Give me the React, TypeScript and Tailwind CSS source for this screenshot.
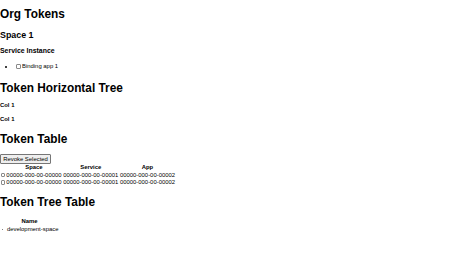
function Box({ className = "" }: { className?: string }) {
  return (
    <span
      className={`inline-block w-[4.6px] h-[4.6px] border-[0.6px] border-[#8a8a8a] rounded-[1px] bg-white align-[-0.5px] ${className}`}
    />
  );
}

const rows = [
  ["00000-000-00-00000", "00000-000-00-00001", "00000-000-00-00002"],
  ["00000-000-00-00000", "00000-000-00-00001", "00000-000-00-00002"],
];

export default function App() {
  const h1 = "text-[11.85px] leading-[1.15] font-bold mb-0";
  const h4 = "text-[5.92px] leading-[1.15] font-bold mb-0";
  return (
    <div className="font-['Liberation_Sans',Arial,sans-serif] text-[5.92px] leading-[1.15] text-black bg-white min-h-[266px] overflow-hidden">
      <h1 className={`${h1} mt-[7.5px]`}>Org Tokens</h1>

      <div>
        <h2 className="text-[8.89px] leading-[1.15] font-bold mt-[8.5px] mb-0">Space 1</h2>
        <h3 className="text-[6.93px] leading-[1.15] font-bold mt-[6.9px] mb-0">Service Instance</h3>
        <ul className="list-disc pl-[14.8px] mt-[8.6px] mb-0">
          <li>
            <label>
              <Box className="ml-[1.5px] mr-[1.1px]" />
              Binding app 1
            </label>
          </li>
        </ul>
      </div>

      <h1 className={`${h1} mt-[11.6px]`}>Token Horizontal Tree</h1>
      <div>
        <h4 className={`${h4} mt-[6.6px]`}>Col 1</h4>
        <h4 className={`${h4} mt-[7.4px]`}>Col 1</h4>
      </div>

      <h1 className={`${h1} mt-[10.6px]`}>Token Table</h1>
      <button className="block mt-[7.2px] text-[5.92px] leading-[1.15] px-[2.2px] py-[0.45px] bg-[#efefef] border-[0.5px] border-[#767676] rounded-[1px]">
        Revoke Selected
      </button>
      <table className="border-separate border-spacing-[0.74px]">
        <thead>
          <tr>
            <th className="p-[0.37px]"></th>
            <th className="py-[0.37px] px-[0.8px] font-bold">Space</th>
            <th className="py-[0.37px] px-[0.8px] font-bold">Service</th>
            <th className="py-[0.37px] px-[0.8px] font-bold">App</th>
          </tr>
        </thead>
        <tbody>
          {rows.map((r, i) => (
            <tr key={i}>
              <td className="p-[0.37px] pl-[0.6px]">
                <Box />
              </td>
              {r.map((c, j) => (
                <td key={j} className="py-[0.37px] px-[0.8px]">{c}</td>
              ))}
            </tr>
          ))}
        </tbody>
      </table>

      <h1 className={`${h1} mt-[9.6px]`}>Token Tree Table</h1>
      <table className="border-separate border-spacing-[0.74px] mt-[8px]">
        <thead>
          <tr>
            <th className="py-[0.6px] px-[0.37px] font-bold">Name</th>
          </tr>
        </thead>
        <tbody>
          <tr>
            <td className="py-[0.6px] px-[0.37px]">
              <span className="inline-block w-[1.3px] h-[1.3px] rounded-full bg-[#555] ml-[1.4px] mr-[3.9px] align-middle" />
              development-space
            </td>
          </tr>
        </tbody>
      </table>
    </div>
  );
}
